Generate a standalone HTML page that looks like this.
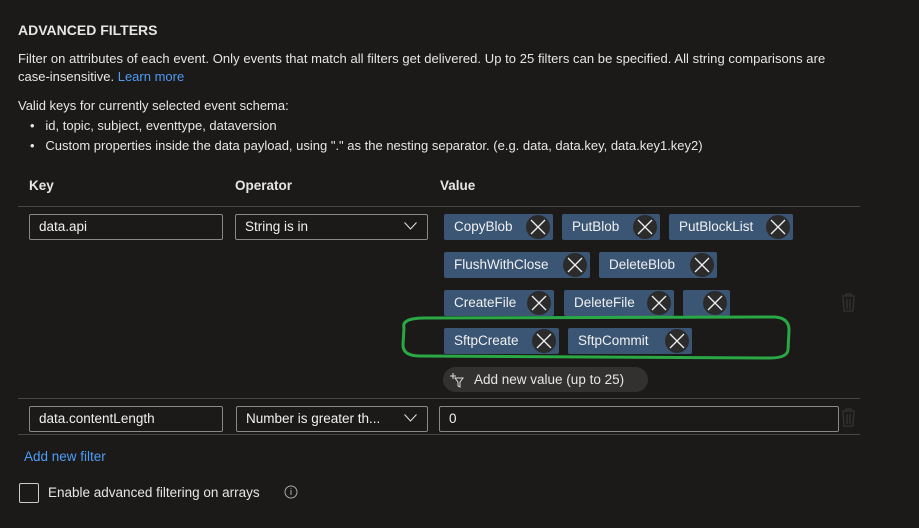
<!DOCTYPE html>
<html><head><meta charset="utf-8"><style>
body{margin:0;width:919px;height:528px;background:#1b1a19;color:#e6e6e6;font-family:"Liberation Sans",sans-serif;font-size:13px;position:relative;overflow:hidden}
.a{position:absolute;white-space:nowrap}
.lnk{color:#4e9cf5}
.inp{position:absolute;border:1px solid #8a8886;border-radius:2px;box-sizing:border-box;height:26px;line-height:24px;padding-left:9px;font-size:13.5px;color:#f0f0f0}
.chev{position:absolute;right:10px;top:7px;width:13px;height:8px}
.chip{position:absolute;height:26px;background:#3a5674;border-radius:2px;line-height:26px;padding-left:10px;font-size:13.5px;color:#f0f0f0;box-sizing:border-box}
.x{position:absolute;right:3px;top:1px;width:24px;height:24px;border-radius:50%;background:#2b2b2b}
.hr{position:absolute;left:18px;width:842px;height:1px;background:#484644}
.th{font-weight:bold;font-size:13.5px}
</style></head><body>
<div class="a" style="left:18px;top:22px;font-weight:bold;font-size:14px">ADVANCED FILTERS</div>
<div class="a" style="left:18px;top:51px;font-size:13px;letter-spacing:0.05px">Filter on attributes of each event. Only events that match all filters get delivered. Up to 25 filters can be specified. All string comparisons are</div>
<div class="a" style="left:18px;top:69px">case-insensitive. <span class="lnk">Learn more</span></div>
<div class="a" style="left:18px;top:98px">Valid keys for currently selected event schema:</div>
<div class="a" style="left:30px;top:118px">•&nbsp;&nbsp; id, topic, subject, eventtype, dataversion</div>
<div class="a" style="left:30px;top:138px">•&nbsp;&nbsp; Custom properties inside the data payload, using "." as the nesting separator. (e.g. data, data.key, data.key1.key2)</div>
<div class="a th" style="left:29px;top:178px">Key</div>
<div class="a th" style="left:235px;top:178px">Operator</div>
<div class="a th" style="left:440px;top:178px">Value</div>
<div class="hr" style="top:206px"></div>
<div class="inp" style="left:29px;top:214px;width:194px">data.api</div>
<div class="inp" style="left:235px;top:214px;width:193px">String is in<svg class="chev" viewBox="0 0 13 8"><path d="M0.5 0.5L6.5 7L12.5 0.5" fill="none" stroke="#ddd" stroke-width="1.1"/></svg></div>

<div class="chip" style="left:444px;top:214px;width:109px">CopyBlob<span class="x"></span></div>
<div class="chip" style="left:562px;top:214px;width:98px">PutBlob<span class="x"></span></div>
<div class="chip" style="left:669px;top:214px;width:124px">PutBlockList<span class="x"></span></div>
<div class="chip" style="left:444px;top:252px;width:146px">FlushWithClose<span class="x"></span></div>
<div class="chip" style="left:599px;top:252px;width:118px">DeleteBlob<span class="x"></span></div>
<div class="chip" style="left:444px;top:290px;width:110px">CreateFile<span class="x"></span></div>
<div class="chip" style="left:564px;top:290px;width:110px">DeleteFile<span class="x"></span></div>
<div class="chip" style="left:683px;top:290px;width:47px"><span class="x"></span></div>
<div class="chip" style="left:444px;top:328px;width:115px">SftpCreate<span class="x"></span></div>
<div class="chip" style="left:568px;top:328px;width:124px">SftpCommit<span class="x"></span></div>
<svg class="a" style="left:0;top:0" width="919" height="528">
<g stroke="#f0f0f0" stroke-width="1.3">
<path d="M531 220l14 14M545 220l-14 14"/><path d="M638 220l14 14M652 220l-14 14"/><path d="M771 220l14 14M785 220l-14 14"/>
<path d="M568 258l14 14M582 258l-14 14"/><path d="M695 258l14 14M709 258l-14 14"/>
<path d="M532 296l14 14M546 296l-14 14"/><path d="M652 296l14 14M666 296l-14 14"/><path d="M708 296l14 14M722 296l-14 14"/>
<path d="M537 334l14 14M551 334l-14 14"/><path d="M670 334l14 14M684 334l-14 14"/>
</g>
<path d="M404 328Q401 318 425 318L775 317Q789 318 789 330L788 350Q787 358 770 358L420 356Q403 356 403 345Z" fill="none" stroke="#2aa845" stroke-width="3"/>
<g fill="none" stroke="#333" stroke-width="1.3">
<path d="M842 296h13M846 296v-2h5v2M843 297l1 14h9l1-14M847 299v10M850 299v10"/>
<path d="M842 411h13M846 411v-2h5v2M843 412l1 14h9l1-14M847 414v10M850 414v10"/>
</g>
<circle cx="291" cy="492" r="6" fill="none" stroke="#aaa" stroke-width="1"/><path d="M291 490v5M291 488v0.8" stroke="#aaa"/>
</svg>
<div class="a" style="left:443px;top:367px;width:205px;height:25px;border-radius:13px;background:#323130"></div>
<svg class="a" style="left:449px;top:372px" width="16" height="16"><path d="M1 4h6M4 1v6M6 6h8l-3 4v5l-2-1v-4z" fill="none" stroke="#ddd" stroke-width="1"/></svg>
<div class="a" style="left:474px;top:372px;font-size:13.5px">Add new value (up to 25)</div>
<div class="hr" style="top:398px"></div>
<div class="inp" style="left:29px;top:406px;width:194px">data.contentLength</div>
<div class="inp" style="left:236px;top:406px;width:192px">Number is greater th...<svg class="chev" viewBox="0 0 13 8"><path d="M0.5 0.5L6.5 7L12.5 0.5" fill="none" stroke="#ddd" stroke-width="1.1"/></svg></div>
<div class="inp" style="left:439px;top:406px;width:400px">0</div>
<div class="hr" style="top:434px"></div>
<div class="a lnk" style="left:24px;top:449px;font-size:13.5px">Add new filter</div>
<div class="a" style="left:19px;top:483px;width:20px;height:20px;border:1px solid #ccc;border-radius:2px;box-sizing:border-box"></div>
<div class="a" style="left:48px;top:485px;font-size:13.5px">Enable advanced filtering on arrays</div>
</body></html>
